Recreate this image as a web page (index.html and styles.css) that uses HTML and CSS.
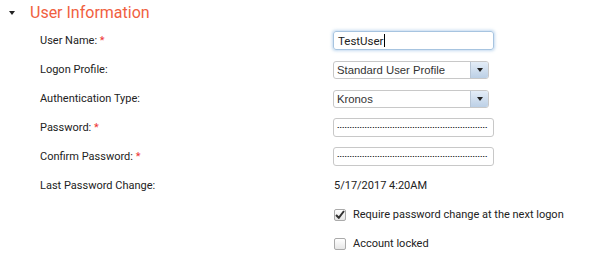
FILE: index.html
```html
<!DOCTYPE html>
<html>
<head>
<meta charset="utf-8">
<link rel="stylesheet" href="styles.css">
</head>
<body>
<div class="section">
  <div class="header">
    <span class="caret"></span>
    <span class="title">User Information</span>
  </div>
  <div class="form">
    <div class="row">
      <div class="label">User Name: <span class="req">*</span></div>
      <div class="field"><div class="input focus">TestUser<span class="cursor"></span></div></div>
    </div>
    <div class="row">
      <div class="label">Logon Profile:</div>
      <div class="field"><div class="select"><span class="val">Standard User Profile</span><span class="btn"><span class="arrow"></span></span></div></div>
    </div>
    <div class="row">
      <div class="label">Authentication Type:</div>
      <div class="field"><div class="select"><span class="val">Kronos</span><span class="btn"><span class="arrow"></span></span></div></div>
    </div>
    <div class="row">
      <div class="label">Password: <span class="req">*</span></div>
      <div class="field"><div class="input pw">••••••••••••••••••••••••••••••••••••••••••••••••••••••••••••</div></div>
    </div>
    <div class="row">
      <div class="label">Confirm Password: <span class="req">*</span></div>
      <div class="field"><div class="input pw">••••••••••••••••••••••••••••••••••••••••••••••••••••••••••••</div></div>
    </div>
    <div class="row">
      <div class="label">Last Password Change:</div>
      <div class="field"><span class="value">5/17/2017 4:20AM</span></div>
    </div>
    <div class="row">
      <div class="label"></div>
      <div class="field check"><span class="box checked"><svg width="10" height="9" viewBox="0 0 10 9"><path d="M1 5 L3.8 7.8 L9 1" fill="none" stroke="#333" stroke-width="2"/></svg></span><span class="ctext">Require password change at the next logon</span></div>
    </div>
    <div class="row">
      <div class="label"></div>
      <div class="field check"><span class="box"></span><span class="ctext">Account locked</span></div>
    </div>
  </div>
</div>
</body>
</html>
```
FILE: styles.css
```css
html, body { margin: 0; padding: 0; background: #fff; }
body { font-family: Roboto, "Liberation Sans", sans-serif; color: #222; font-size: 11px; }
.section { padding: 0; }
.header { display: flex; align-items: center; height: 24px; }
.caret { width: 0; height: 0; border-left: 3px solid transparent; border-right: 3px solid transparent; border-top: 4px solid #222; margin-left: 9px; margin-right: 15px; margin-top: 1px; }
.title { font-size: 16px; color: #f0603f; }
.form { padding-left: 40px; padding-top: 2px; }
.row { display: flex; align-items: center; height: 29px; }
.label { width: 293px; font-size: 11px; color: #222; }
.req { color: #e33; }
.field { display: flex; align-items: center; }
.input { box-sizing: border-box; width: 161px; height: 19px; border: 1px solid #c8c8c8; border-radius: 3px; padding: 0 4px; display: flex; align-items: center; }
.input.focus { border-color: #a7c4e0; box-shadow: 0 0 3px 1px rgba(120,170,220,0.45); font-family: Roboto, sans-serif; font-size: 11.5px; color: #222; }
.cursor { display: inline-block; width: 1px; height: 13px; background: #000; }
.input.pw { font-family: "DejaVu Sans", sans-serif; font-size: 4px; letter-spacing: 0.15px; overflow: hidden; white-space: nowrap; color: #000; padding-left: 3px; padding-right: 1px; }
.select { box-sizing: border-box; width: 156px; height: 18px; border: 1px solid #c8c8c8; border-radius: 3px; display: flex; align-items: stretch; overflow: hidden; }
.val { flex: 1; padding-left: 3px; font-size: 11.3px; display: flex; align-items: center; font-family: "Liberation Sans", sans-serif; color: #333; }
.btn { width: 17px; border-left: 1px solid #b8c6d6; background: linear-gradient(#e4edf7, #bcd0e6); display: flex; align-items: center; justify-content: center; }
.arrow { width: 0; height: 0; border-left: 3.5px solid transparent; border-right: 3.5px solid transparent; border-top: 4px solid #222; }
.value { font-size: 11px; padding-left: 1px; }
.check { gap: 7px; }
.box { box-sizing: border-box; width: 12px; height: 12px; border: 1px solid #aaa; border-radius: 2px; background: linear-gradient(#fff, #e6e6e6); display: flex; align-items: center; justify-content: center; margin-left: 1px; }
.ctext { font-size: 11px; }
```
